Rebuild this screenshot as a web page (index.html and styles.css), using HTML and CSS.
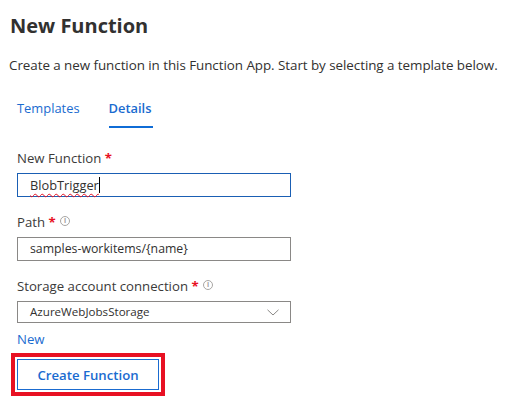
FILE: index.html
```html
<!DOCTYPE html>
<html>
<head>
<meta charset="utf-8">
<link rel="stylesheet" href="styles.css">
</head>
<body>
<div class="page">
  <h1 class="title">New Function</h1>
  <p class="subtitle">Create a new function in this Function App. Start by selecting a template below.</p>
  <div class="form">
    <div class="tabs">
      <span class="tab">Templates</span>
      <span class="tab active">Details</span>
    </div>
    <div class="field first">
      <div class="label">New Function <span class="req">*</span></div>
      <div class="input focused"><span class="spell">BlobTrigger</span><span class="caret"></span></div>
    </div>
    <div class="field">
      <div class="label">Path <span class="req">*</span> <span class="info">i</span></div>
      <div class="input">samples-workitems/{name}</div>
    </div>
    <div class="field">
      <div class="label">Storage account connection <span class="req">*</span> <span class="info">i</span></div>
      <div class="select"><span>AzureWebJobsStorage</span>
        <svg class="chev" width="12" height="7" viewBox="0 0 12 7"><path d="M0.5 0.8 L6 6 L11.5 0.8" fill="none" stroke="#8a8886" stroke-width="1"/></svg>
      </div>
      <a class="link">New</a>
    </div>
    <div class="highlight">
      <button class="btn">Create Function</button>
    </div>
  </div>
</div>
</body>
</html>
```
FILE: styles.css
```css
html, body {
  margin: 0;
  padding: 0;
  background: #fff;
}
body {
  font-family: "Open Sans", "Noto Sans", sans-serif;
  color: #323130;
}
.page {
  padding: 12px 0 0 10px;
}
.title {
  margin: 0;
  font-size: 20px;
  line-height: 28px;
  font-weight: 700;
  color: #323130;
}
.subtitle {
  margin: 16px 0 0 -1px;
  font-size: 13.4px;
  line-height: 18px;
  letter-spacing: -0.05px;
}
.form {
  padding-left: 7px;
  margin-top: 24px;
}
.tabs {
  display: flex;
  gap: 29px;
}
.tab {
  font-size: 12.9px;
  line-height: 20px;
  color: #1a6bd0;
  padding-bottom: 10px;
}
.tab.active {
  font-weight: 600;
  padding-bottom: 8px;
  border-bottom: 2px solid #0f6cd6;
  padding-right: 2px;
}
.field {
  margin-top: 15px;
}
.field.first {
  margin-top: 20px;
}
.label {
  font-size: 13.2px;
  line-height: 20px;
  color: #3b3a39;
  margin-bottom: 5px;
}
.req {
  color: #e81123;
  font-weight: 700;
}
.info {
  display: inline-block;
  box-sizing: border-box;
  width: 10px;
  height: 10px;
  border: 1px solid #a8a6a4;
  border-radius: 50%;
  font-size: 7px;
  font-weight: 700;
  line-height: 8px;
  text-align: center;
  color: #a19f9d;
  vertical-align: 4px;
  margin-left: 1px;
}
.input {
  box-sizing: border-box;
  width: 274px;
  height: 24px;
  border: 1px solid #8a8886;
  padding: 0 12px;
  font-size: 12.3px;
  line-height: 22px;
  color: #323130;
}
.input.focused {
  border-color: #1a5fb4;
  font-size: 12.8px;
}
.spell {
  text-decoration: underline wavy #e81123;
  text-decoration-thickness: 1px;
  text-underline-offset: 3px;
}
.caret {
  display: inline-block;
  width: 1px;
  height: 16px;
  background: #000;
  vertical-align: -3px;
}
.select {
  box-sizing: border-box;
  width: 274px;
  height: 22px;
  border: 1px solid #8a8886;
  padding: 0 11px 0 12px;
  font-size: 11.6px;
  line-height: 20px;
  display: flex;
  justify-content: space-between;
  align-items: center;
}
.link {
  display: block;
  margin-top: 6px;
  font-size: 13.2px;
  line-height: 20px;
  color: #1a6bd0;
}
.highlight {
  display: inline-block;
  border: 4px solid #e81123;
  padding: 2px;
  margin: 4px 0 0 -6px;
}
.btn {
  display: block;
  box-sizing: border-box;
  width: 142px;
  height: 31px;
  background: #fff;
  border: 1px solid #1a6bd0;
  color: #1a6bd0;
  font-family: "Open Sans", "Noto Sans", sans-serif;
  font-size: 13.2px;
  font-weight: 600;
  padding: 0;
}
```
